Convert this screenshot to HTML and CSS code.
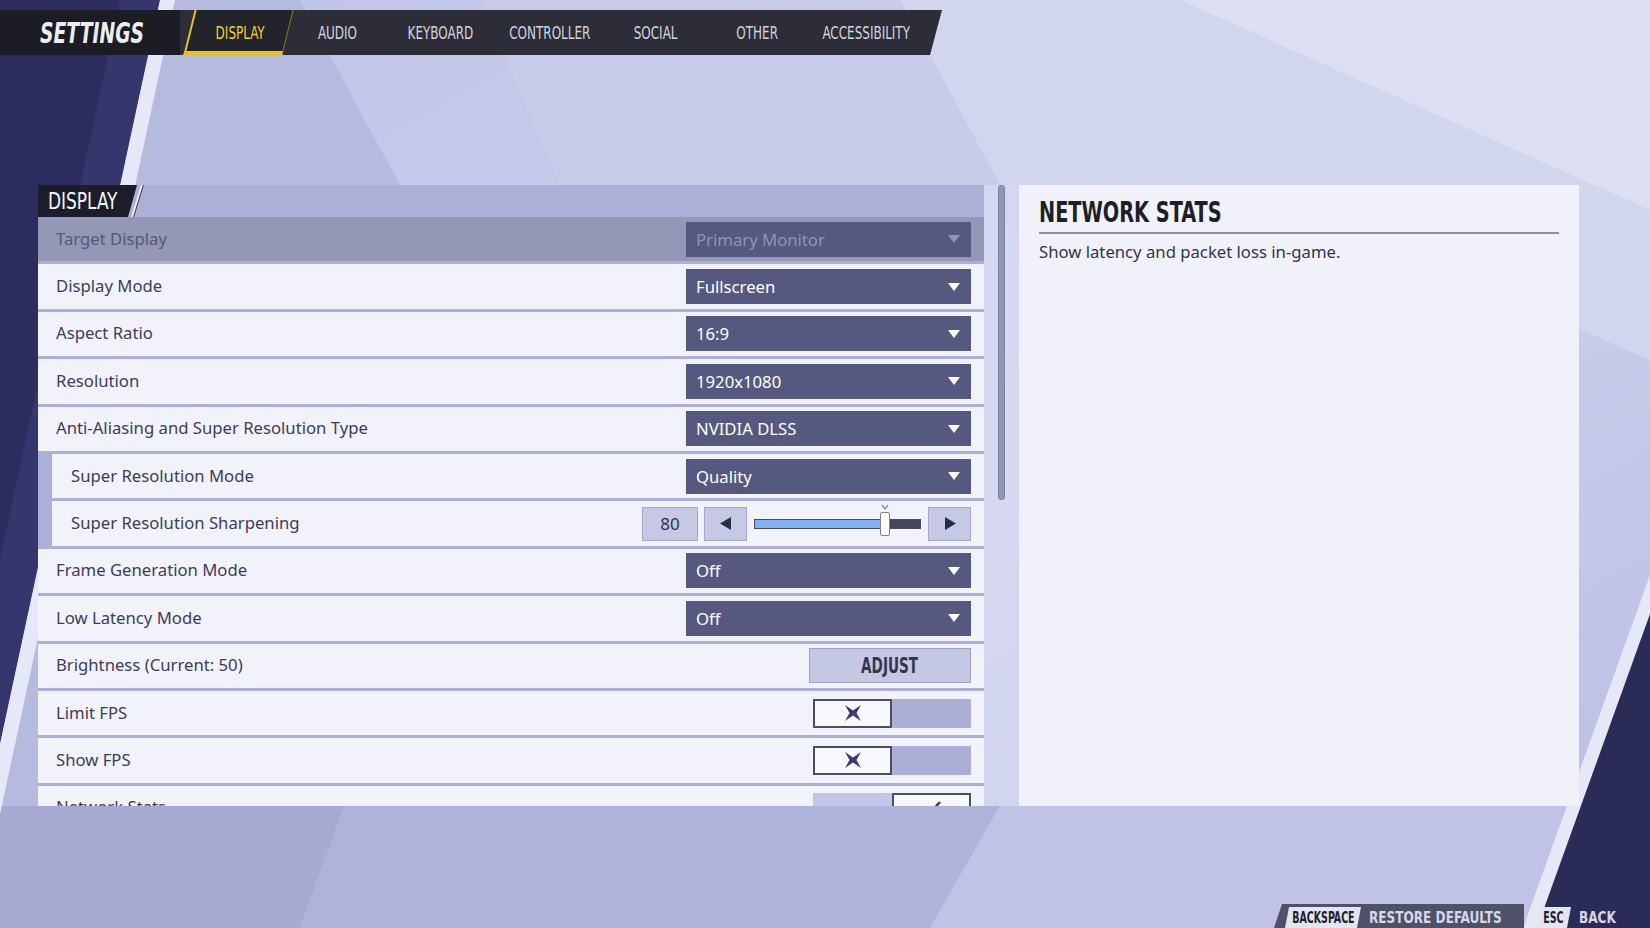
FILE: index.html
```html
<!DOCTYPE html>
<html lang="en">

<head>
    <meta charset="UTF-8">
    <title>Settings - Display</title>
    <link rel="stylesheet" href="styles.css">
</head>

<body>
    <svg class="backdrop" viewBox="0 0 1650 928" aria-hidden="true">
        <defs>
            <linearGradient id="sky" x1="0" y1="0" x2="1" y2="1">
                <stop offset="0" stop-color="#bfc3e7" />
                <stop offset="0.55" stop-color="#cdd0ec" />
                <stop offset="1" stop-color="#b9bde3" />
            </linearGradient>
        </defs>
        <rect width="1650" height="928" fill="url(#sky)" />
        <polygon points="900,0 1650,0 1650,360 1250,185 1000,185" fill="#d2d5ee" />
        <polygon points="1180,0 1650,0 1650,210" fill="#dcdff2" />
        <polygon points="480,0 900,0 1000,185 560,185" fill="#c8cbe9" />
        <polygon points="175,0 300,0 400,185 345,806 0,806 0,814" fill="#b6badf" />
        <polygon points="0,806 345,806 300,928 0,928" fill="#a6a9d2" />
        <polygon points="345,806 1000,806 930,928 300,928" fill="#afb3dc" />
        <polygon points="1000,806 1600,806 1523,928 930,928" fill="#c0c3e5" />
        <polygon points="0,0 160,0 0,744" fill="#2c2c5e" />
        <polygon points="120,0 160,0 0,744 0,560" fill="#36366f" />
        <polygon points="160,0 175,0 0,814 0,744" fill="#e6e8f7" />
        <polygon points="1523,928 1537,928 1650,614 1650,575" fill="#e6e8f7" />
        <polygon points="1537,928 1650,928 1650,614" fill="#2b2b58" />
    </svg>

    <header class="topbar">
        <div class="brand"><span class="squeeze">SETTINGS</span></div>
        <nav class="tabs">
            <a class="tab active" href="#"><span class="squeeze">DISPLAY</span></a>
            <a class="tab" href="#"><span class="squeeze">AUDIO</span></a>
            <a class="tab" href="#"><span class="squeeze">KEYBOARD</span></a>
            <a class="tab" href="#"><span class="squeeze">CONTROLLER</span></a>
            <a class="tab" href="#"><span class="squeeze">SOCIAL</span></a>
            <a class="tab" href="#"><span class="squeeze">OTHER</span></a>
            <a class="tab" href="#"><span class="squeeze">ACCESSIBILITY</span></a>
        </nav>
    </header>

    <main class="content">
        <section class="settings-panel">
            <div class="panel-head">
                <h2 class="panel-title"><span class="squeeze">DISPLAY</span></h2>
                <span class="panel-slash"></span>
            </div>
            <div class="rows">
                <div class="row disabled">
                    <span class="label">Target Display</span>
                    <div class="select disabled">Primary Monitor</div>
                </div>
                <div class="row">
                    <span class="label">Display Mode</span>
                    <div class="select">Fullscreen</div>
                </div>
                <div class="row">
                    <span class="label">Aspect Ratio</span>
                    <div class="select">16:9</div>
                </div>
                <div class="row">
                    <span class="label">Resolution</span>
                    <div class="select">1920x1080</div>
                </div>
                <div class="row">
                    <span class="label">Anti-Aliasing and Super Resolution Type</span>
                    <div class="select">NVIDIA DLSS</div>
                </div>
                <div class="row sub">
                    <span class="label">Super Resolution Mode</span>
                    <div class="select">Quality</div>
                </div>
                <div class="row sub">
                    <span class="label">Super Resolution Sharpening</span>
                    <div class="stepper">
                        <span class="value-box">80</span>
                        <button class="step-btn" type="button">
                            <svg width="12" height="13" viewBox="0 0 12 13"><polygon points="11,0 11,13 0,6.5" /></svg>
                        </button>
                        <div class="track">
                            <div class="track-fill" style="width: 79%"></div>
                            <span class="thumb" style="left: 79%">
                                <svg class="thumb-mark" width="8" height="6" viewBox="0 0 8 6"><polyline points="1,1 4,5 7,1" /></svg>
                            </span>
                        </div>
                        <button class="step-btn" type="button">
                            <svg width="12" height="13" viewBox="0 0 12 13"><polygon points="1,0 1,13 12,6.5" /></svg>
                        </button>
                    </div>
                </div>
                <div class="row">
                    <span class="label">Frame Generation Mode</span>
                    <div class="select">Off</div>
                </div>
                <div class="row">
                    <span class="label">Low Latency Mode</span>
                    <div class="select">Off</div>
                </div>
                <div class="row">
                    <span class="label">Brightness (Current: 50)</span>
                    <button class="adjust-btn" type="button"><span class="squeeze">ADJUST</span></button>
                </div>
                <div class="row">
                    <span class="label">Limit FPS</span>
                    <div class="toggle">
                        <span class="toggle-box">
                            <svg width="20" height="18" viewBox="0 0 20 18"><path d="M2 1 L10 6.5 L18 1 L13.5 9 L18 17 L10 11.5 L2 17 L6.5 9 Z" /></svg>
                        </span>
                        <span class="toggle-fill"></span>
                    </div>
                </div>
                <div class="row">
                    <span class="label">Show FPS</span>
                    <div class="toggle">
                        <span class="toggle-box">
                            <svg width="20" height="18" viewBox="0 0 20 18"><path d="M2 1 L10 6.5 L18 1 L13.5 9 L18 17 L10 11.5 L2 17 L6.5 9 Z" /></svg>
                        </span>
                        <span class="toggle-fill"></span>
                    </div>
                </div>
                <div class="row">
                    <span class="label">Network Stats</span>
                    <div class="toggle on">
                        <span class="toggle-fill"></span>
                        <span class="toggle-box">
                            <svg width="22" height="18" viewBox="0 0 22 18"><polyline class="check" points="3,10 8,15 19,3" /></svg>
                        </span>
                    </div>
                </div>
            </div>
        </section>

        <div class="scroll-gutter">
            <div class="scroll-thumb"></div>
        </div>

        <aside class="info-panel">
            <h3 class="info-title"><span class="squeeze">NETWORK STATS</span></h3>
            <p class="info-text">Show latency and packet loss in-game.</p>
        </aside>
    </main>

    <footer class="legend">
        <div class="hint hint-dark">
            <span class="key key-wide"><span class="squeeze">BACKSPACE</span></span>
            <span class="action action-wide"><span class="squeeze">RESTORE DEFAULTS</span></span>
        </div>
        <div class="hint">
            <span class="key key-short"><span class="squeeze">ESC</span></span>
            <span class="action action-short"><span class="squeeze">BACK</span></span>
        </div>
    </footer>
</body>

</html>
```

FILE: styles.css
```css
* {
    box-sizing: border-box;
}

body {
    margin: 0;
    width: 1650px;
    height: 928px;
    overflow: hidden;
    position: relative;
    background: #c2c6e8;
    font-family: "Noto Sans", "Open Sans", sans-serif;
    color: #3b3e57;
}

.backdrop {
    position: absolute;
    top: 0;
    left: 0;
    width: 1650px;
    height: 928px;
    z-index: 0;
}

.topbar,
.content,
.legend {
    position: relative;
    z-index: 1;
}

.squeeze {
    display: inline-block;
    white-space: nowrap;
    transform: scaleX(0.74);
}

/* top navigation */

.topbar {
    display: flex;
    margin-top: 10px;
    width: 942px;
    height: 45px;
    background: #2c2d37;
    clip-path: polygon(0 0, 100% 0, calc(100% - 12px) 100%, 0 100%);
}

.brand {
    width: 180px;
    padding-left: 40px;
    display: flex;
    align-items: center;
    background: #1b1c24;
    color: #eceef5;
    font: italic bold 29px "DejaVu Sans Condensed", "DejaVu Sans", sans-serif;
}

.brand .squeeze {
    transform: scaleX(0.72);
    transform-origin: left center;
}

.tabs {
    display: flex;
    padding-left: 12px;
}

.tab {
    position: relative;
    z-index: 0;
    display: flex;
    align-items: center;
    justify-content: center;
    color: #d3d5df;
    font: 18px "DejaVu Sans Condensed", "DejaVu Sans", sans-serif;
    text-decoration: none;
}

.tab:nth-child(1) { width: 96px; }
.tab:nth-child(2) { width: 98px; }
.tab:nth-child(3) { width: 108px; }
.tab:nth-child(4) { width: 112px; }
.tab:nth-child(5) { width: 100px; }
.tab:nth-child(6) { width: 103px; }
.tab:nth-child(7) { width: 114px; }

.tab.active {
    color: #f2d12e;
}

.tab.active::before {
    content: "";
    position: absolute;
    top: 0;
    bottom: 0;
    left: -3px;
    right: 0;
    z-index: -1;
    background: #22232b;
    border-left: 2px solid #e9c51c;
    border-right: 1px solid #8d7a2a;
    border-bottom: 4px solid #e9c51c;
    transform: skewX(-14deg);
}

/* main area */

.content {
    display: flex;
    margin-top: 130px;
    padding-left: 38px;
    height: 621px;
}

.settings-panel {
    width: 946px;
    display: flex;
    flex-direction: column;
    background: #acafd7;
}

.panel-head {
    display: flex;
    height: 32px;
    flex-shrink: 0;
}

.panel-title {
    margin: 0;
    width: 99px;
    padding-left: 10px;
    display: flex;
    align-items: center;
    background: #1c1d2a;
    color: #f3f4f9;
    font: normal 23px "DejaVu Sans Condensed", "DejaVu Sans", sans-serif;
    clip-path: polygon(0 0, 100% 0, calc(100% - 9px) 100%, 0 100%);
}

.panel-title .squeeze {
    transform: scaleX(0.82);
    transform-origin: left center;
}

.panel-slash {
    width: 3px;
    margin-left: -1.5px;
    background: #eef0fa;
    border-right: 1px solid #2a2b3c;
    transform: skewX(-17deg);
}

.rows {
    flex: 1;
    display: flex;
    flex-direction: column;
    gap: 3px;
    overflow: hidden;
}

.row {
    flex-shrink: 0;
    height: 44.4px;
    display: flex;
    align-items: center;
    justify-content: space-between;
    padding: 0 13px 0 18px;
    background: #f2f3fa;
    font-size: 16.7px;
    color: #3b3e57;
}

.row .label {
    margin-top: -2px;
}

.row.sub {
    margin-left: 14px;
    padding-left: 19px;
}

.row.disabled {
    background: #9497b5;
    color: #565975;
}

.select {
    width: 285px;
    height: 35px;
    display: flex;
    align-items: center;
    justify-content: space-between;
    padding: 0 10px 0 10px;
    background: #55587f;
    color: #ffffff;
    font-size: 16.7px;
}

.select::after {
    content: "";
    border-left: 6px solid transparent;
    border-right: 6px solid transparent;
    border-top: 8px solid currentColor;
    margin-right: 1px;
}

.select.disabled {
    color: #9093b5;
}

/* slider */

.stepper {
    display: flex;
    align-items: center;
    gap: 7px;
}

.value-box {
    width: 56px;
    height: 34px;
    margin-right: -1px;
    display: flex;
    align-items: center;
    justify-content: center;
    background: #c6c9e4;
    border: 1px solid #a4a7c9;
    color: #2f3148;
    font-size: 17px;
}

.step-btn {
    width: 43px;
    height: 34px;
    padding: 0;
    display: flex;
    align-items: center;
    justify-content: center;
    background: #c6c9e4;
    border: 1px solid #a4a7c9;
}

.step-btn svg {
    fill: #2b2d44;
}

.track {
    position: relative;
    width: 167px;
    height: 10px;
    background: #45475f;
    border: 1px solid #4a4c66;
}

.track-fill {
    height: 100%;
    background: #83b0f0;
}

.thumb {
    position: absolute;
    top: -8px;
    width: 10px;
    height: 24px;
    margin-left: -5px;
    background: #ffffff;
    border: 1px solid #7e8199;
    border-radius: 2px;
}

.thumb-mark {
    position: absolute;
    top: -9px;
    left: 0;
    fill: none;
    stroke: #8b8ea8;
    stroke-width: 1.4;
}

/* buttons and toggles */

.adjust-btn {
    width: 162px;
    height: 35px;
    padding: 0;
    background: #c5c8e3;
    border: 1px solid #9ea1c4;
    color: #33354e;
    font: bold 21px "DejaVu Sans Condensed", "DejaVu Sans", sans-serif;
}

.adjust-btn .squeeze {
    transform: scaleX(0.72);
}

.toggle {
    display: flex;
    width: 158px;
    height: 29px;
}

.toggle-box {
    width: 79px;
    display: flex;
    align-items: center;
    justify-content: center;
    background: #f8f9fd;
    border: 2px solid #4b4d69;
}

.toggle-box svg {
    fill: #3b3e6c;
}

.toggle-fill {
    flex: 1;
    background: #abaed6;
}

.toggle.on .toggle-fill {
    background: #c3c6e8;
}

.check {
    fill: none;
    stroke: #3b3e6c;
    stroke-width: 2.5;
}

/* scrollbar */

.scroll-gutter {
    width: 35px;
    display: flex;
    justify-content: center;
    background: rgba(226, 229, 246, 0.45);
}

.scroll-thumb {
    width: 7px;
    height: 315px;
    background: #9295b5;
    border: 1px solid #7d80a0;
    border-radius: 3px;
}

/* info panel */

.info-panel {
    width: 560px;
    padding: 12px 20px 0;
    background: #f1f2f9;
}

.info-title {
    margin: 0;
    padding-bottom: 3px;
    border-bottom: 2px solid #8d8fa4;
    color: #1d1e29;
    font: bold 29px "DejaVu Sans Condensed", "DejaVu Sans", sans-serif;
    line-height: 1.1;
}

.info-title .squeeze {
    transform-origin: left center;
}

.info-text {
    margin: 6px 0 0;
    font-size: 16.7px;
    color: #33354a;
}

/* key hints */

.legend {
    display: flex;
    justify-content: flex-end;
    gap: 12px;
    margin-top: 98px;
    height: 24px;
    padding-right: 32px;
}

.hint {
    display: flex;
    align-items: flex-end;
    gap: 8px;
    height: 24px;
}

.hint-dark {
    padding: 0 16px 0 11px;
    background: #4f5168;
    clip-path: polygon(8px 0, 100% 0, 100% 100%, 0 100%);
}

.key {
    height: 21px;
    display: flex;
    align-items: center;
    justify-content: center;
    background: #e3e5f1;
    color: #1e1f2c;
    font: bold 15px "DejaVu Sans Condensed", "DejaVu Sans", sans-serif;
    clip-path: polygon(4px 0, 100% 0, calc(100% - 4px) 100%, 0 100%);
}

.key-wide { width: 76px; }
.key-short { width: 35px; }

.key .squeeze {
    transform: scaleX(0.7);
}

.action {
    height: 21px;
    display: flex;
    align-items: center;
    color: #d6d8e6;
    font: bold 16px "DejaVu Sans Condensed", "DejaVu Sans", sans-serif;
}

.action-wide { width: 139px; }
.action-short { width: 39px; }

.action .squeeze {
    transform: scaleX(0.84);
    transform-origin: left center;
}
```
